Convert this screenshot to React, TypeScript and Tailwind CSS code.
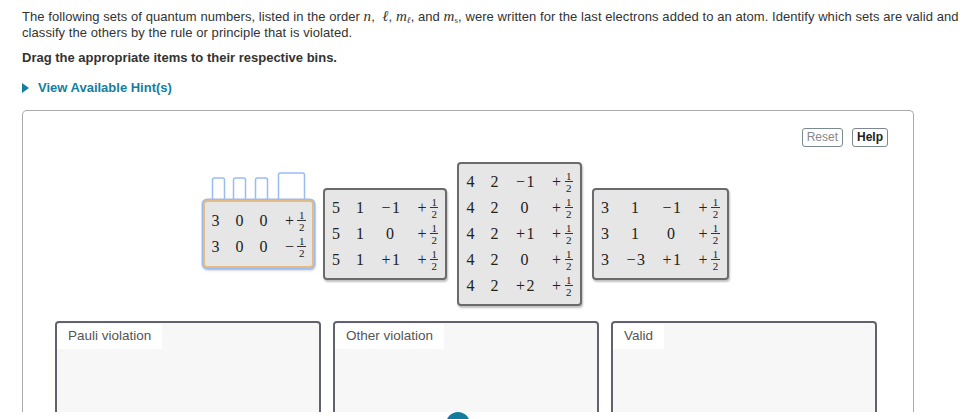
import React from "react";

const Half = () => (
  <span className="inline-flex flex-col items-center text-[11px] leading-[10px] align-middle ml-[2px]">
    <span className="px-[1.5px]">1</span>
    <span className="border-t border-[#333] px-[1.5px] pt-[1px]">2</span>
  </span>
);

const Spin = ({ sign }: { sign: string }) => (
  <span className="inline-flex items-center">
    <span className="mx-[1.5px]">{sign}</span>
    <Half />
  </span>
);

const Num = ({ v }: { v: string }) => {
  if (v.length > 1) {
    return (
      <span className="h-[26px] leading-[26px]">
        <span className="mx-[1.5px]">{v[0]}</span>
        {v.slice(1)}
      </span>
    );
  }
  return <span className="h-[26px] leading-[26px]">{v}</span>;
};

type Row = [string, string, string, string];

const Grid = ({ rows }: { rows: Row[] }) => (
  <div className="grid grid-cols-[auto_auto_auto_auto] gap-x-[16px] justify-items-center items-center">
    {rows.map((r, i) => (
      <React.Fragment key={i}>
        <Num v={r[0]} />
        <Num v={r[1]} />
        <Num v={r[2]} />
        <span className="h-[26px] flex items-center">
          <Spin sign={r[3]} />
        </span>
      </React.Fragment>
    ))}
  </div>
);

const Item = ({ rows }: { rows: Row[] }) => (
  <div className="rounded-[4px] border-2 border-[#6b6b6b] bg-[#e6e6e6] px-[7px] py-[5px] shadow-[1px_2px_2px_rgba(0,0,0,0.25)]">
    <Grid rows={rows} />
  </div>
);

const Bin = ({ label }: { label: string }) => (
  <div className="h-[120px] w-[266px] rounded-[4px] border-2 border-[#62626f] bg-[#f7f7f7]">
    <div className="inline-flex h-[25px] items-center bg-white px-[11px] text-[13.5px] text-[#555]">
      {label}
    </div>
  </div>
);

const M = ({ children }: { children: React.ReactNode }) => (
  <span className="font-['Liberation_Serif',serif] italic text-[15px]">{children}</span>
);

export default function App() {
  return (
    <div className="relative h-[419px] w-[977px] overflow-hidden bg-white font-['Liberation_Sans',Arial,sans-serif]">
      <div className="h-[412px] overflow-hidden">
        <div className="pl-[22px] pt-[8px] text-[#333]">
          <p className="whitespace-nowrap text-[13px] tracking-[0.07px] leading-[16px]">
            The following sets of quantum numbers, listed in the order <M>n</M>,&nbsp; <M>ℓ</M>,{" "}
            <M>
              m<sub className="text-[9px]">ℓ</sub>
            </M>
            , and{" "}
            <M>
              m<sub className="text-[9px] not-italic">s</sub>
            </M>
            , were written for the last electrons added to an atom. Identify which sets are valid and
            <br />
            classify the others by the rule or principle that is violated.
          </p>
          <p className="mt-[9px] text-[13px] font-bold leading-[16px]">
            Drag the appropriate items to their respective bins.
          </p>
          <div className="mt-[14px] flex items-center gap-[9px] text-[13px] font-bold leading-[16px] text-[#157da0]">
            <svg width="7" height="10" viewBox="0 0 7 10">
              <path d="M0 0 L7 5 L0 10 Z" fill="#157da0" />
            </svg>
            <span>View Available Hint(s)</span>
          </div>
        </div>

        <div className="ml-[22px] mt-[14px] h-[320px] w-[892px] rounded-t-[5px] border border-b-0 border-[#aaaaaa]">
          <div className="flex justify-end gap-[9px] pr-[25px] pt-[17px]">
            <button className="h-[19px] rounded-[3px] border border-[#7b8a90] px-[4px] text-[12px] leading-[17px] text-[#888]">
              Reset
            </button>
            <button className="h-[19px] rounded-[3px] border border-[#7b8a90] px-[4px] text-[12px] font-bold leading-[17px] text-[#222]">
              Help
            </button>
          </div>

          <div className="mt-[15px] flex h-[144px] items-center justify-center gap-[10px] pr-[4px] font-['Liberation_Serif',serif] text-[16px] text-[#222]">
            <div className="relative mr-[-1px]">
              <svg
                className="absolute left-[-1px] top-[-29px]"
                width="116"
                height="30"
                viewBox="0 0 116 30"
                fill="none"
              >
                <path
                  d="M10.5 29 V9 Q10.5 7 12.5 7 H20.5 Q22.5 7 22.5 9 V29 M31.5 29 V9 Q31.5 7 33.5 7 H41.5 Q43.5 7 43.5 9 V29 M53.5 29 V9 Q53.5 7 55.5 7 H63.5 Q65.5 7 65.5 9 V29 M76.5 29 V4 Q76.5 2 78.5 2 H100.5 Q102.5 2 102.5 4 V29"
                  stroke="#9bbcf2"
                  strokeWidth="1.5"
                />
              </svg>
              <div className="rounded-[4px] border-2 border-[#e3bb83] bg-[#e6e6e6] px-[6px] py-[6px] shadow-[0_0_0_1.5px_#9bbcf2,1px_2px_3px_rgba(0,0,0,0.3)]">
                <Grid
                  rows={[
                    ["3", "0", "0", "+"],
                    ["3", "0", "0", "−"],
                  ]}
                />
              </div>
            </div>
            <Item
              rows={[
                ["5", "1", "−1", "+"],
                ["5", "1", "0", "+"],
                ["5", "1", "+1", "+"],
              ]}
            />
            <Item
              rows={[
                ["4", "2", "−1", "+"],
                ["4", "2", "0", "+"],
                ["4", "2", "+1", "+"],
                ["4", "2", "0", "+"],
                ["4", "2", "+2", "+"],
              ]}
            />
            <Item
              rows={[
                ["3", "1", "−1", "+"],
                ["3", "1", "0", "+"],
                ["3", "−3", "+1", "+"],
              ]}
            />
          </div>

          <div className="mt-[15px] flex gap-[12px] pl-[32px]">
            <Bin label="Pauli violation" />
            <Bin label="Other violation" />
            <Bin label="Valid" />
          </div>
        </div>
      </div>
      <div className="absolute left-[446px] top-[412px] h-[24px] w-[24px] rounded-full bg-[#137b9c]" />
    </div>
  );
}
